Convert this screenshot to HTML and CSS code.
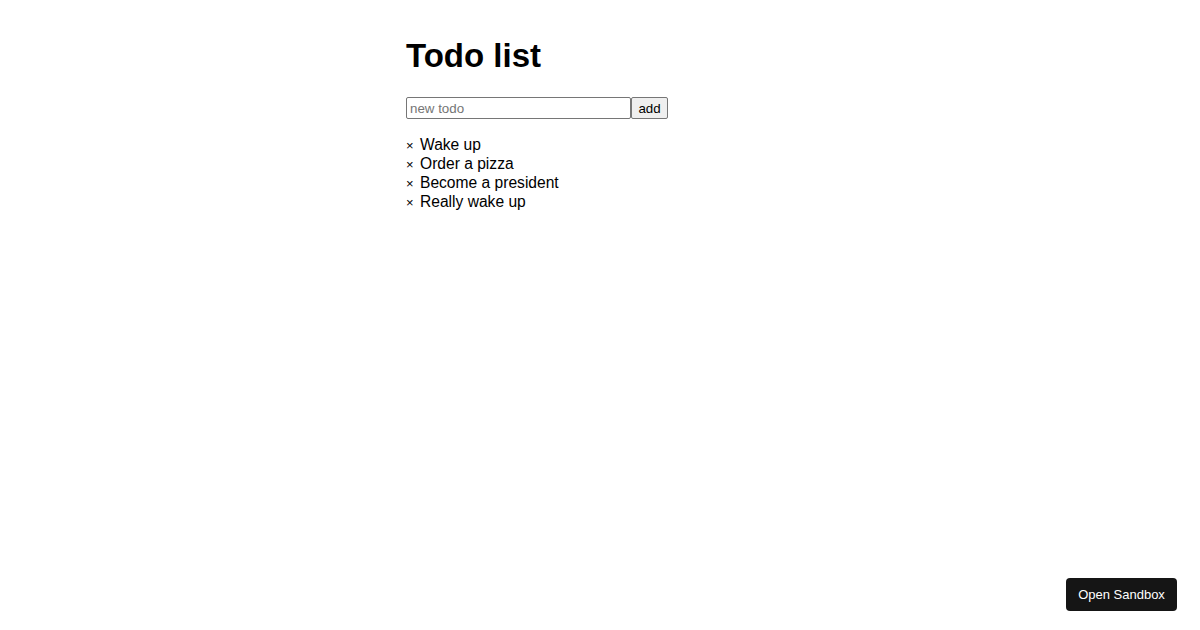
FILE: index.html
```html
<!DOCTYPE html>
<html>
<head>
<meta charset="utf-8">
<link rel="stylesheet" href="styles.css">
</head>
<body>
<main class="app">
  <h1 class="title">Todo list</h1>
  <form class="add-form">
    <input class="new-todo" type="text" placeholder="new todo">
    <button class="add-btn" type="button">add</button>
  </form>
  <ul class="todos">
    <li class="todo"><span class="remove">×</span><span class="label">Wake up</span></li>
    <li class="todo"><span class="remove">×</span><span class="label">Order a pizza</span></li>
    <li class="todo"><span class="remove">×</span><span class="label">Become a president</span></li>
    <li class="todo"><span class="remove">×</span><span class="label">Really wake up</span></li>
  </ul>
</main>
<a class="sandbox-btn">Open Sandbox</a>
</body>
</html>
```

FILE: styles.css
```css
html, body {
  margin: 0;
  padding: 0;
  background: #fff;
}
body {
  font-family: "Liberation Sans", Arial, sans-serif;
  color: #000;
}
.app {
  width: 388px;
  margin: 0 auto;
  padding-top: 37px;
}
.title {
  font-size: 33px;
  font-weight: bold;
  margin: 0 0 23px 0;
  line-height: 37px;
}
.add-form {
  display: flex;
  margin: 0;
}
.new-todo {
  box-sizing: border-box;
  width: 225px;
  height: 22px;
  margin: 0;
  padding: 1px 3px;
  border: 1px solid #767676;
  border-radius: 2px;
  font-family: "Liberation Sans", Arial, sans-serif;
  font-size: 13.333px;
}
.new-todo::placeholder {
  color: #757575;
}
.add-btn {
  box-sizing: border-box;
  height: 22px;
  width: 37px;
  margin: 0;
  padding: 0;
  border: 1px solid #767676;
  border-radius: 2px;
  background: #efefef;
  font-family: "Liberation Sans", Arial, sans-serif;
  font-size: 13.333px;
  color: #000;
}
.todos {
  list-style: none;
  margin: 16px 0 0 0;
  padding: 0;
}
.todo {
  font-size: 15.6px;
  line-height: 19px;
  height: 19px;
}
.remove {
  display: inline-block;
  font-size: 13px;
  width: 14px;
}
.sandbox-btn {
  position: fixed;
  right: 23px;
  bottom: 19px;
  width: 111px;
  height: 33px;
  box-sizing: border-box;
  display: flex;
  align-items: center;
  justify-content: center;
  background: #151515;
  color: #fff;
  border-radius: 4px;
  font-size: 13px;
  font-family: "Liberation Sans", Arial, sans-serif;
}
```
